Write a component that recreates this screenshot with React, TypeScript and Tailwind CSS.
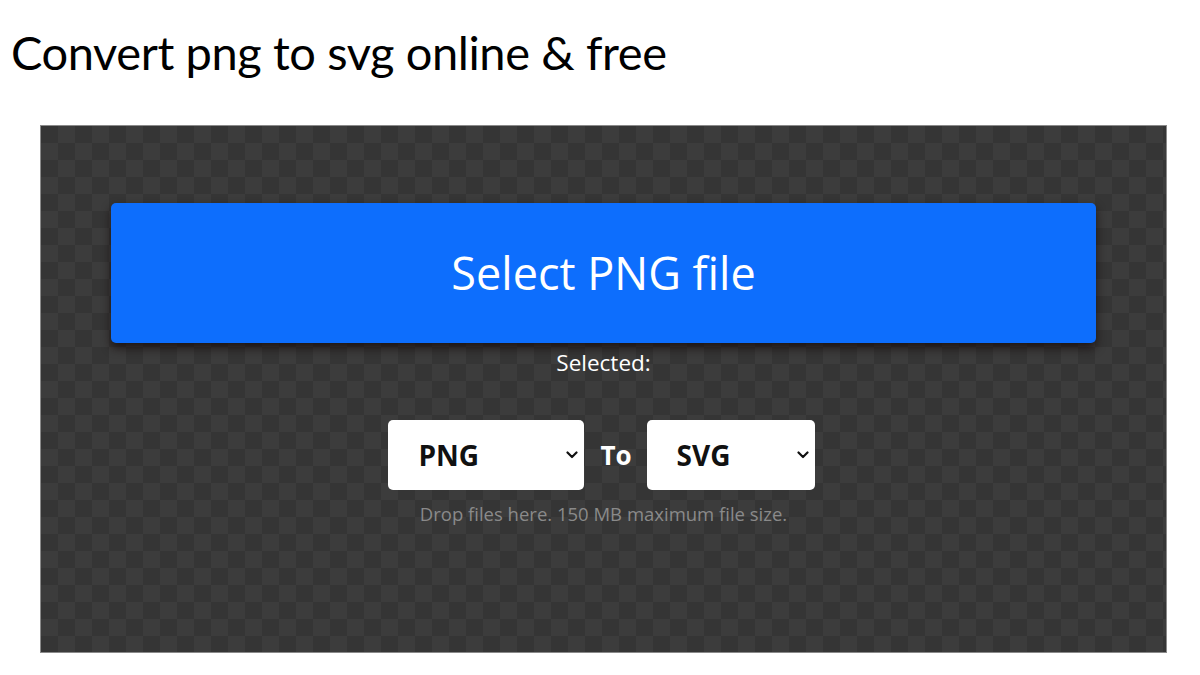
import React from "react";

function Chevron() {
  return (
    <svg width="12" height="8" viewBox="0 0 12 8" className="shrink-0">
      <path d="M1.5 1.5 L6 6 L10.5 1.5" fill="none" stroke="#111" strokeWidth="2.2" strokeLinecap="round" strokeLinejoin="round" />
    </svg>
  );
}

function FakeSelect({ label, width }: { label: string; width: string }) {
  return (
    <div className={`${width} h-[70px] bg-white rounded-[5px] flex items-center justify-between pl-[30px] pr-[6px]`}>
      <span className="text-[28px] font-bold text-[#111] leading-none">{label}</span>
      <Chevron />
    </div>
  );
}

export default function App() {
  return (
    <div className="w-[1200px] h-[675px] bg-white overflow-hidden font-['Open_Sans','Noto_Sans',sans-serif]">
      <h1 className="pl-[11px] pt-[22px] h-[125px] text-[47px] leading-[60px] text-black font-['Lato','Noto_Sans',sans-serif] font-normal tracking-[-0.4px]">
        Convert png to svg online &amp; free
      </h1>
      <div className="ml-[40px] w-[1127px] h-[528px] border border-[#8a8a8a] bg-[#353535] bg-[image:conic-gradient(#3c3c3c_25%,#353535_0_50%,#3c3c3c_0_75%,#353535_0)] bg-[length:34px_34px] flex flex-col items-center pt-[77px]">
        <div className="w-[985px] h-[140px] bg-[#0d6efd] rounded-[5px] shadow-[0_5px_10px_rgba(20,10,10,0.75)] flex items-center justify-center">
          <span className="text-white text-[45px] leading-none pb-[2px]">Select PNG file</span>
        </div>
        <div className="mt-[5px] text-white text-[22.5px] leading-[30px]">Selected:</div>
        <div className="mt-[42px] mr-[4px] flex items-center">
          <FakeSelect label="PNG" width="w-[196px]" />
          <span className="ml-[16px] mr-[15px] text-white font-bold text-[26px] leading-none">To</span>
          <FakeSelect label="SVG" width="w-[168px]" />
        </div>
        <div className="mt-[11px] text-[#8a8a8a] text-[18.5px] leading-[26px]">
          Drop files here. 150 MB maximum file size.
        </div>
      </div>
    </div>
  );
}
